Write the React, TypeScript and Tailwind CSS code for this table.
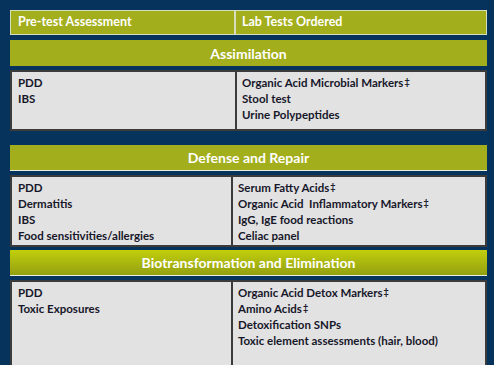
import React from 'react';

type Section = {
  title: string;
  left: string[];
  right: string[];
  leftW: string;
  bar: string;
  box: string;
};

const sections: Section[] = [
  {
    title: 'Assimilation',
    left: ['PDD', 'IBS'],
    right: ['Organic Acid Microbial Markers‡', 'Stool test', 'Urine Polypeptides'],
    leftW: 'w-[225px]',
    bar: 'mt-[5px] h-[26px] bg-[#a3ae1c]',
    box: 'mt-[4px] h-[61px]',
  },
  {
    title: 'Defense and Repair',
    left: ['PDD', 'Dermatitis', 'IBS', 'Food sensitivities/allergies'],
    right: ['Serum Fatty Acids‡', 'Organic Acid  Inflammatory Markers‡', 'IgG, IgE food reactions', 'Celiac panel'],
    leftW: 'w-[221px]',
    bar: 'mt-[14px] h-[26px] bg-[#a3ae1c] border-b border-[#e8eee0]',
    box: 'mt-[4px] h-[72px]',
  },
  {
    title: 'Biotransformation and Elimination',
    left: ['PDD', 'Toxic Exposures'],
    right: ['Organic Acid Detox Markers‡', 'Amino Acids‡', 'Detoxification SNPs', 'Toxic element assessments (hair, blood)'],
    leftW: 'w-[221px]',
    bar: 'mt-[3px] h-[26px] bg-gradient-to-b from-[#c2cf0a] to-[#93a011] border-b border-[#e8eee0]',
    box: 'mt-[4px] h-[90px]',
  },
];

function Lines({ items }: { items: string[] }) {
  return (
    <>
      {items.map((t) => (
        <div key={t} className="h-[16px] leading-[16px] whitespace-pre">
          {t.endsWith('‡') ? (
            <>
              {t.slice(0, -1)}
              <sup className="text-[9px] relative top-[-2px] ml-[1px]">‡</sup>
            </>
          ) : (
            t
          )}
        </div>
      ))}
    </>
  );
}

export default function App() {
  return (
    <div
      className="w-[494px] h-[365px] overflow-hidden bg-[#06335c] pt-[10px] pl-[10px] pr-[7px] flex flex-col"
      style={{ fontFamily: 'Lato, "Open Sans", sans-serif' }}
    >
      {/* column header */}
      <div className="shrink-0 h-[25px] bg-[#a3ae1c] border border-[#d7dec0] flex text-white text-[12.5px] font-bold">
        <div className="w-[225px] border-r-2 border-[#d7dec0] pl-[7px] flex items-center">Pre-test Assessment</div>
        <div className="flex-1 pl-[6px] flex items-center">Lab Tests Ordered</div>
      </div>

      {sections.map((s) => (
        <div key={s.title} className="shrink-0 flex flex-col">
          <div className={`${s.bar} shrink-0 flex items-center justify-center text-white text-[14px] font-bold`}>
            {s.title}
          </div>
          <div className={`${s.box} shrink-0 bg-[#e2e2e2] border-2 border-[#3b3b3b] flex text-[11.5px] font-bold text-[#17172a]`}>
            <div className={`${s.leftW} shrink-0 border-r-2 border-[#3b3b3b] pl-[6px] pt-[3px]`}>
              <Lines items={s.left} />
            </div>
            <div className="flex-1 pl-[5px] pt-[3px]">
              <Lines items={s.right} />
            </div>
          </div>
        </div>
      ))}
    </div>
  );
}
